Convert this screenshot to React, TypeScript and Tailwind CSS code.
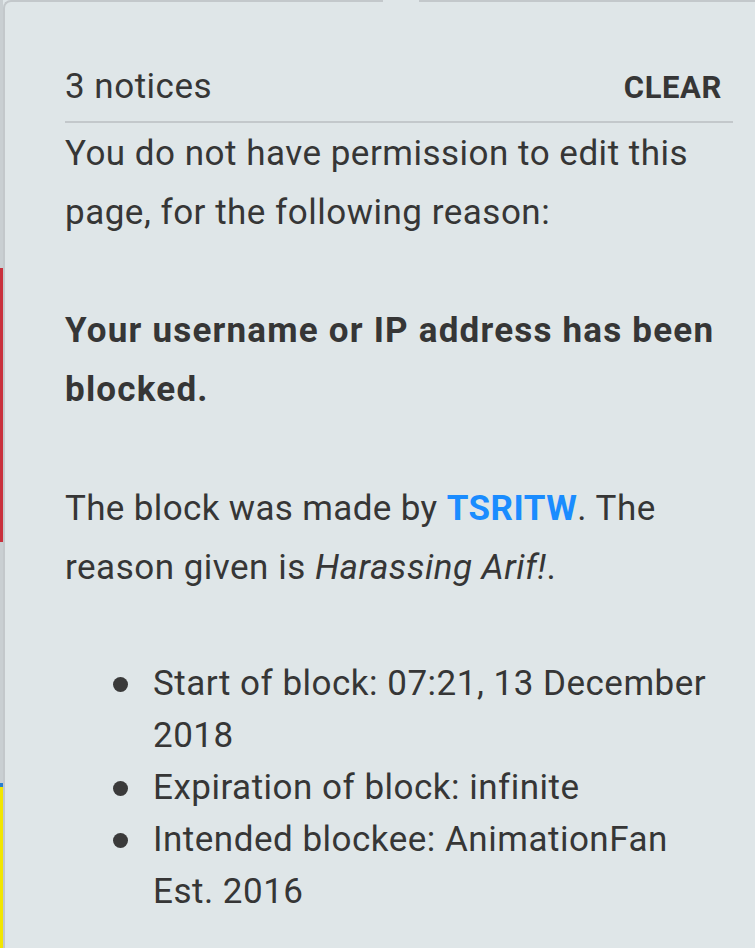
import React from "react";

function Item({ children }: { children: React.ReactNode }) {
  return (
    <li className="flex">
      <span className="shrink-0 w-[15px] h-[15px] rounded-full bg-[#3a3a3a] mt-[19px] ml-[48px] mr-[25px]" />
      <span>{children}</span>
    </li>
  );
}

export default function App() {
  const font = { fontFamily: "Roboto, 'Noto Sans', sans-serif" };
  return (
    <div className="w-[755px] h-[948px] overflow-hidden bg-[#dfe6e8] flex" style={font}>
      <div className="w-[3px] flex flex-col shrink-0">
        <div className="h-[268px] bg-[#c9cfd2]" />
        <div className="h-[274px] bg-[#c9303c]" />
        <div className="h-[241px] bg-[#c9cfd2]" />
        <div className="h-[4px] bg-[#2a7fd0]" />
        <div className="flex-1 bg-[#f2e600]" />
      </div>
      <div className="relative flex-1 border-l-2 border-t-2 border-[#c3c8cb] rounded-tl-[8px] pl-[60px] pr-[22px] pt-[65px] text-[#363636]">
        <div className="absolute top-[-2px] left-[378px] w-[36px] h-[2px] bg-[#dfe6e8]" />
        <div className="flex items-baseline justify-between border-b-2 border-[#c3c8cb] pb-[13px] leading-[40px]">
          <span className="text-[35px] tracking-[0.5px]">3 notices</span>
          <span className="text-[31px] font-bold tracking-[0.6px] mr-[11px]">CLEAR</span>
        </div>
        <div className="text-[35px] leading-[59px] tracking-[0.5px] pt-[1px]">
          <p>You do not have permission to edit this page, for the following reason:</p>
          <p className="mt-[59px] font-bold tracking-[1.2px]">Your username or IP address has been blocked.</p>
          <p className="mt-[60px]">
            <span className="tracking-[0.35px]">The block was made by</span> <span className="font-bold text-[#1a8cff] tracking-[0.5px]">TSRITW</span>. The reason given is <i>Harassing Arif!</i>.
          </p>
          <ul className="mt-[61px] leading-[52px]">
            <Item>Start of block: 07:21, 13 December 2018</Item>
            <Item>Expiration of block: infinite</Item>
            <Item>Intended blockee: AnimationFan Est. 2016</Item>
          </ul>
        </div>
      </div>
    </div>
  );
}
